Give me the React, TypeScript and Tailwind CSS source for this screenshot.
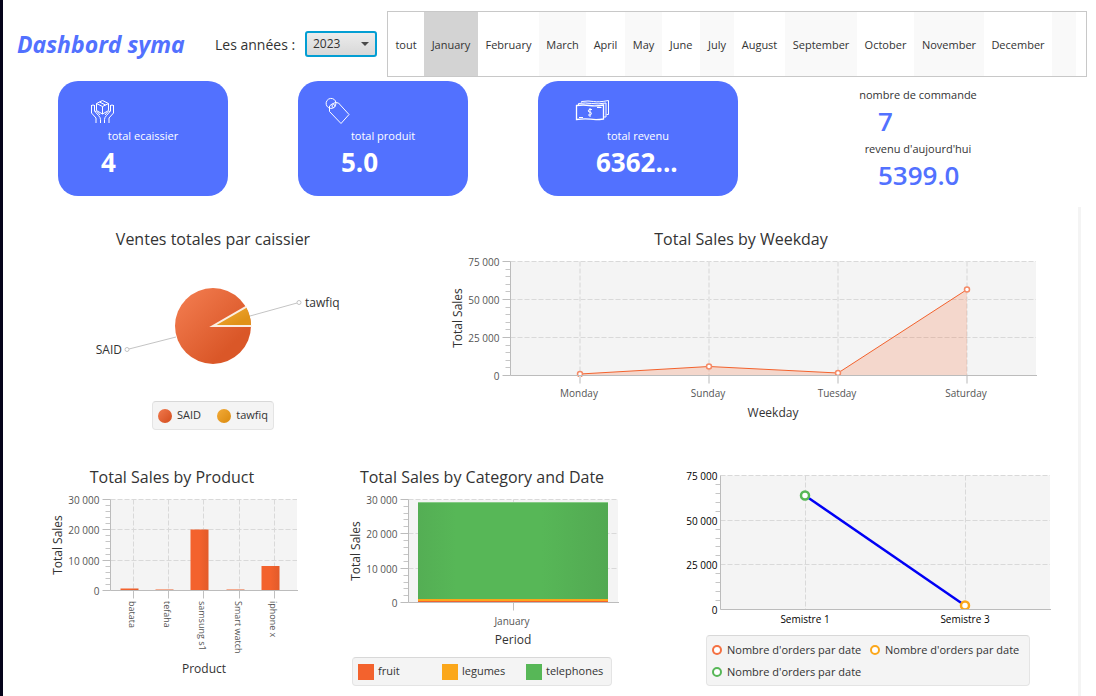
import type { ReactNode } from "react";

const months = [
  { name: "tout", width: "w-[36px]" },
  { name: "January", width: "w-[54px]" },
  { name: "February", width: "w-[61px]" },
  { name: "March", width: "w-[47px]" },
  { name: "April", width: "w-[39px]" },
  { name: "May", width: "w-[37px]" },
  { name: "June", width: "w-[38px]" },
  { name: "July", width: "w-[34px]" },
  { name: "August", width: "w-[51px]" },
  { name: "September", width: "w-[72px]" },
  { name: "October", width: "w-[57px]" },
  { name: "November", width: "w-[70px]" },
  { name: "December", width: "w-[68px]" },
];

function HandsBoxIcon() {
  return (
    <svg viewBox="0 0 48 28" className="h-7 w-12" fill="none" stroke="white" strokeWidth="1" aria-hidden="true">
      <path d="M11.5 6.5 17.5 3.5l6 3v7l-6 3.5-6-3.5zM11.5 6.5l6 3 6-3M17.5 9.5V17M14.5 5l6 3" />
      <path d="M6.5 8v8l4.5 5V26M9.5 8v6l4 4.5q2 2 2 4V26M6.5 8.5q1.5-1 3 0M10 14.5q1.5-1 2.5.5l2.5 3" />
      <path d="M28.5 8v8L24 21V26M25.5 8v6l-4 4.5q-2 2-2 4V26M28.5 8.5q-1.5-1-3 0M25 14.5q-1.5-1-2.5.5l-2.5 3" />
    </svg>
  );
}

function TagIcon() {
  return (
    <svg viewBox="0 0 48 28" className="h-7 w-12" fill="none" stroke="white" strokeWidth="1" aria-hidden="true">
      <path d="M10.5 5.5 13.5 6 24 17.5 16 26.5 4.5 14.5V9l2.5-2z" />
      <path d="M9 10.5A5 5 0 1 1 10.5 4q1 3-.5 5.5" />
      <circle cx="8.5" cy="9" r="1.5" />
    </svg>
  );
}

function CashIcon() {
  return (
    <svg viewBox="0 0 48 28" className="h-7 w-12" fill="none" stroke="white" strokeWidth="1" aria-hidden="true">
      <path d="M11.5 8.5q7-1 13 0t14-.5V22q-7 1-13 .2t-14 .3z" strokeWidth="1.3" />
      <path d="M13.5 8V6.5q7-1 13 0t14.5-.5v14h-2" />
      <path d="M16.5 5.5V4.5q7-1 12 0t15-1V17.5h-2" />
      <path d="M14 20.5h4M32 10.5h4.5" />
      <path d="M27 12.5h-3q-1.5 1.5 0 2.5h1.5q2 1.5 0 3H23M25 11v9" />
    </svg>
  );
}

const cards = [
  { label: "total ecaissier", value: "4", icon: <HandsBoxIcon />, width: "w-[170px]" },
  { label: "total produit", value: "5.0", icon: <TagIcon />, width: "w-[170px]" },
  { label: "total revenu", value: "6362...", icon: <CashIcon />, width: "w-[200px]" },
];

type Tick = { at: number; label: string };

type AxesProps = {
  left: number;
  right: number;
  yTicks: Tick[];
  xLines: number[];
  tickLength?: number;
  labelGap?: number;
  labelColor?: string;
  wideLines?: boolean;
  children: ReactNode;
};

// Plot background, dashed grid, series, then the axis lines on top
function Axes({
  left,
  right,
  yTicks,
  xLines,
  tickLength = 8,
  labelGap = 11,
  labelColor = "#555555",
  wideLines,
  children,
}: AxesProps) {
  const bottom = yTicks[0].at;
  const top = yTicks[yTicks.length - 1].at;
  const lineWidth = wideLines ? 2 : 1;
  const lineColor = wideLines ? "#e5e5e5" : "#d9d9d9";
  const minor = yTicks.slice(1).flatMap((tick, i) => {
    const step = (tick.at - yTicks[i].at) / 5;
    return [1, 2, 3, 4].map((n) => Math.floor(yTicks[i].at + step * n) + 0.5);
  });

  return (
    <>
      <rect x={left} y={top} width={right - left} height={bottom - top} fill="#f4f4f4" />
      {yTicks.slice(1).map((t) => (
        <line key={t.at} x1={left} x2={right} y1={t.at} y2={t.at} stroke="#d9d9d9" strokeDasharray="5 2" />
      ))}
      {xLines.map((x) => (
        <line key={x} x1={x} x2={x} y1={top} y2={bottom} stroke={lineColor} strokeWidth={lineWidth} strokeDasharray="5 2" />
      ))}
      {children}
      {minor.map((y) => (
        <line key={y} x1={left - 5} x2={left} y1={y} y2={y} stroke="#c6c6c6" />
      ))}
      {tickLength > 0 &&
        yTicks.map((t) => (
          <line key={t.at} x1={left - tickLength} x2={left} y1={t.at} y2={t.at} stroke="#bcbcbc" />
        ))}
      {tickLength > 0 &&
        xLines.map((x) => (
          <line key={x} x1={x} x2={x} y1={bottom} y2={bottom + 8} stroke={wideLines ? "#dcdcdc" : "#c0c0c0"} strokeWidth={lineWidth} />
        ))}
      <path d={`M${left} ${top}V${bottom}H${right + 1}`} fill="none" stroke="#bcbcbc" />
      {yTicks.map((t) => (
        <text key={t.at} x={left - labelGap} y={t.at + 4} textAnchor="end" fontSize="10" fill={labelColor}>
          {t.label}
        </text>
      ))}
    </>
  );
}

function AxisTitle({ x, y, vertical, children }: { x: number; y: number; vertical?: boolean; children: string }) {
  return (
    <text
      x={x}
      y={y}
      textAnchor="middle"
      fontSize="12"
      fill="#333333"
      transform={vertical ? `rotate(-90 ${x} ${y})` : undefined}
    >
      {children}
    </text>
  );
}

function ChartTitle({ children }: { children: string }) {
  return <h2 className="text-center text-[16px] leading-6 whitespace-nowrap text-[#333333]">{children}</h2>;
}

const legendBox = "mx-auto rounded-[4px] border border-[#e4e4e4] border-t-[#d8d8d8] bg-[#f4f4f4] px-[5px]";

function CashierChart() {
  return (
    <section className="flex flex-col">
      <ChartTitle>Ventes totales par caissier</ChartTitle>
      <svg viewBox="0 0 260 150" className="w-full overflow-visible">
        <defs>
          <linearGradient id="pieOrange" x1="0" y1="0" x2="1" y2="1">
            <stop offset="0.1" stopColor="#f17a4d" />
            <stop offset="0.75" stopColor="#da5728" />
          </linearGradient>
          <linearGradient id="pieYellow" x1="0" y1="0" x2="1" y2="1">
            <stop offset="0.1" stopColor="#f3ab37" />
            <stop offset="0.75" stopColor="#e09218" />
          </linearGradient>
        </defs>
        <circle cx="130" cy="75" r="38" fill="url(#pieOrange)" />
        <path d="M130 75 163 56A38 38 0 0 1 168 75z" fill="url(#pieYellow)" />
        <path d="M163.5 55.7 130 75H168.5" fill="none" stroke="#fbeee2" strokeWidth="2" />
        <path d="M93 86 46 98M167 65 214 52" stroke="#c4c4c4" />
        <circle cx="44" cy="98.5" r="2" fill="white" stroke="#c4c4c4" />
        <circle cx="216" cy="51.5" r="2" fill="white" stroke="#c4c4c4" />
        <text x="39" y="103" textAnchor="end" fontSize="12" fill="#333333">
          SAID
        </text>
        <text x="222" y="56" fontSize="12" fill="#333333">
          tawfiq
        </text>
      </svg>
      <ul className={`${legendBox} flex h-[29px] w-[122px] items-center justify-between`}>
        <li className="flex items-center gap-[5px]">
          <span className="size-[14px] rounded-full bg-linear-to-br from-[#f17a4d] to-[#da5728] to-75%" />
          SAID
        </li>
        <li className="flex items-center gap-[5px]">
          <span className="size-[14px] rounded-full bg-linear-to-br from-[#f3ab37] to-[#e09218] to-75%" />
          tawfiq
        </li>
      </ul>
    </section>
  );
}

function WeekdayChart() {
  const points = [
    { day: "Monday", x: 139, y: 123 },
    { day: "Sunday", x: 268, y: 115.5 },
    { day: "Tuesday", x: 397, y: 122 },
    { day: "Saturday", x: 526, y: 38.5 },
  ];
  const line = points.map((p) => `${p.x},${p.y}`).join(" ");

  return (
    <section>
      <ChartTitle>Total Sales by Weekday</ChartTitle>
      <svg viewBox="0 0 600 170" className="w-full overflow-visible">
        <Axes
          left={69.5}
          right={595}
          yTicks={[
            { at: 124.5, label: "0" },
            { at: 86.5, label: "25 000" },
            { at: 48.5, label: "50 000" },
            { at: 10.5, label: "75 000" },
          ]}
          xLines={points.map((p) => p.x)}
          wideLines
        >
          <polygon points={`139,124.5 ${line} 526,124.5`} fill="#f3622d" fillOpacity="0.2" />
          <polyline points={line} fill="none" stroke="#f3622d" />
          {points.map((p) => (
            <circle key={p.day} cx={p.x} cy={p.y} r="2.5" fill="white" stroke="#f58a66" strokeWidth="1.5" />
          ))}
        </Axes>
        {points.map((p) => (
          <text key={p.day} x={p.x - 1} y="146" textAnchor="middle" fontSize="10" fill="#555555">
            {p.day}
          </text>
        ))}
        <AxisTitle x={332} y={166}>
          Weekday
        </AxisTitle>
        <AxisTitle x={21} y={67} vertical>
          Total Sales
        </AxisTitle>
      </svg>
    </section>
  );
}

function ProductChart() {
  const bars = [
    { name: "batata", x: 93.5, y: 99.5 },
    { name: "tefaha", x: 128.5, y: 100.5 },
    { name: "samsung s1", x: 163.5, y: 40.5 },
    { name: "Smart watch", x: 199.5, y: 100.5 },
    { name: "iphone x", x: 234.5, y: 77 },
  ];

  return (
    <section>
      <ChartTitle>Total Sales by Product</ChartTitle>
      <svg viewBox="0 0 264 192" className="w-full overflow-visible">
        <defs>
          <linearGradient id="barOrange">
            <stop offset="0.5" stopColor="#f3622d" />
            <stop offset="1" stopColor="#e25b2a" />
          </linearGradient>
        </defs>
        <Axes
          left={70.5}
          right={257}
          yTicks={[
            { at: 101.5, label: "0" },
            { at: 71.5, label: "10 000" },
            { at: 40.5, label: "20 000" },
            { at: 10.5, label: "30 000" },
          ]}
          xLines={bars.map((b) => b.x)}
        >
          {bars.map((b) => (
            <rect key={b.name} x={b.x - 13} y={b.y} width="18" height={101.5 - b.y} fill="url(#barOrange)" />
          ))}
        </Axes>
        {bars.map((b) => (
          <text key={b.name} x={b.x - 5} y="112" transform={`rotate(90 ${b.x - 5} 112)`} fontSize="9" fill="#555555">
            {b.name}
          </text>
        ))}
        <AxisTitle x={164} y={184}>
          Product
        </AxisTitle>
        <AxisTitle x={22} y={56} vertical>
          Total Sales
        </AxisTitle>
      </svg>
    </section>
  );
}

function CategoryChart() {
  return (
    <section className="flex flex-col">
      <ChartTitle>Total Sales by Category and Date</ChartTitle>
      <svg viewBox="0 0 316 168" className="w-full overflow-visible">
        <defs>
          <linearGradient id="barGreen">
            <stop offset="0" stopColor="#54ae54" />
            <stop offset="0.2" stopColor="#57b757" />
            <stop offset="0.65" stopColor="#57b757" />
            <stop offset="1" stopColor="#52a952" />
          </linearGradient>
        </defs>
        <Axes
          left={84.5}
          right={294}
          yTicks={[
            { at: 113.5, label: "0" },
            { at: 79.5, label: "10 000" },
            { at: 44.5, label: "20 000" },
            { at: 10.5, label: "30 000" },
          ]}
          xLines={[189.5]}
        >
          <rect x="94" y="13" width="190" height="98" fill="url(#barGreen)" />
          <rect x="94" y="13" width="190" height="1" fill="#86cb86" />
          <rect x="94" y="110" width="190" height="2" fill="#fba71b" />
          <rect x="94" y="112" width="190" height="1" fill="#f3622d" />
        </Axes>
        <text x="188" y="136" textAnchor="middle" fontSize="10" fill="#555555">
          January
        </text>
        <AxisTitle x={189} y={155}>
          Period
        </AxisTitle>
        <AxisTitle x={36} y={62} vertical>
          Total Sales
        </AxisTitle>
      </svg>
      <ul className={`${legendBox} grid h-[29px] w-[260px] grid-cols-[84px_84px_1fr] items-center`}>
        <li className="flex items-center gap-1">
          <span className="size-4 bg-[#f3622d]" />
          fruit
        </li>
        <li className="flex items-center gap-1">
          <span className="size-4 bg-[#fba71b]" />
          legumes
        </li>
        <li className="flex items-center gap-1">
          <span className="size-4 bg-[#57b757]" />
          telephones
        </li>
      </ul>
    </section>
  );
}

function OrdersChart() {
  const colors = ["border-[#f3622d]/90", "border-[#fba71b]", "border-[#57b757]"];

  return (
    <section className="flex flex-col">
      <svg viewBox="0 0 416 170" className="w-full overflow-visible">
        <clipPath id="ordersPlot">
          <rect x="60" y="10" width="331" height="134" />
        </clipPath>
        <Axes
          left={60.5}
          right={390}
          yTicks={[
            { at: 144.5, label: "0" },
            { at: 99.5, label: "25 000" },
            { at: 55.5, label: "50 000" },
            { at: 10.5, label: "75 000" },
          ]}
          xLines={[145.5, 305.5]}
          tickLength={0}
          labelGap={3}
          labelColor="#000000"
        >
          <g clipPath="url(#ordersPlot)" strokeWidth="2.5">
            <line x1="145" y1="30.5" x2="305" y2="140.5" stroke="#0000f5" />
            <circle cx="145" cy="30.5" r="4" fill="white" stroke="#57b757" />
            <circle cx="305" cy="140.5" r="4" fill="white" stroke="#fba71b" />
          </g>
        </Axes>
        <text x="145" y="158" textAnchor="middle" fontSize="10">
          Semistre 1
        </text>
        <text x="305" y="158" textAnchor="middle" fontSize="10">
          Semistre 3
        </text>
      </svg>
      <ul className={`${legendBox} grid h-[51px] w-[324px] grid-cols-[158px_1fr] content-center leading-[22px]`}>
        {colors.map((color) => (
          <li key={color} className="flex items-center gap-[5px] whitespace-nowrap">
            <span className={`size-[10px] shrink-0 rounded-full border-2 bg-white ${color}`} />
            Nombre d'orders par date
          </li>
        ))}
      </ul>
    </section>
  );
}

export default function App() {
  return (
    <div className="flex min-h-screen flex-col border-l-[3px] border-[#05041a] bg-white font-['Open_Sans','Noto_Sans',sans-serif] text-[11px] text-[#333333]">
      <header className="flex items-center pt-[11px] pr-[9px] pl-[14px]">
        <h1 className="w-[198px] shrink-0 text-[23px] font-bold whitespace-nowrap text-[#5271ff] italic">Dashbord syma</h1>
        <label htmlFor="year" className="w-[90px] shrink-0 text-[14px] whitespace-nowrap">
          Les années :
        </label>
        <div className="relative mr-[10px] shrink-0">
          <select
            id="year"
            defaultValue="2023"
            className="block h-[26px] w-[72px] appearance-none rounded-[3px] border-2 border-[#039ed3] bg-linear-to-b from-[#ececec] to-[#d8d8d8] pl-[6px] text-[12px]"
          >
            <option>2022</option>
            <option>2023</option>
          </select>
          <span className="pointer-events-none absolute top-[11px] right-2 border-x-4 border-t-4 border-x-transparent border-t-[#4a4a4a]" />
        </div>
        <div className="flex h-[66px] min-w-0 flex-1 overflow-hidden border border-[#c8c8c8]">
          {months.map((month, i) => (
            <button
              key={month.name}
              type="button"
              className={`${month.width} shrink-0 pt-0.5 text-center ${
                month.name === "January" ? "bg-[#d3d3d3]" : i > 1 && i % 2 === 1 ? "bg-[#f9f9f9]" : "bg-white"
              }`}
            >
              {month.name}
            </button>
          ))}
          <span className="w-6 bg-[#f9f9f9]" />
        </div>
      </header>

      <div className="mt-1 flex gap-[70px] pl-[55px]">
        {cards.map((card) => (
          <div key={card.label} className={`${card.width} h-[115px] shrink-0 rounded-[20px] bg-[#5271ff] pt-4 text-white`}>
            <div className="pl-[27px]">{card.icon}</div>
            <p className="text-center leading-[22px]">{card.label}</p>
            <p className="mx-auto w-[84px] text-[26px] leading-[30px] font-bold">{card.value}</p>
          </div>
        ))}
        <div className="w-[220px] text-center leading-[27px]">
          <p>nombre de commande</p>
          <p className="mx-auto w-[80px] text-left text-[26px] font-semibold text-[#5271ff]">7</p>
          <p>revenu d'aujourd'hui</p>
          <p className="mx-auto w-[80px] text-left text-[26px] font-semibold text-[#5271ff]">5399.0</p>
        </div>
      </div>

      <main className="mt-[11px] mr-[15px] flex-1 border-r-[3px] border-[#f4f4f4] pt-5">
        <div className="grid grid-cols-[260fr_600fr] gap-[98px] pr-[37px] pl-20">
          <CashierChart />
          <WeekdayChart />
        </div>
        <div className="mt-[35px] grid grid-cols-[264fr_316fr_416fr] gap-5 pr-[2px] pl-[37px]">
          <ProductChart />
          <CategoryChart />
          <OrdersChart />
        </div>
      </main>
    </div>
  );
}
